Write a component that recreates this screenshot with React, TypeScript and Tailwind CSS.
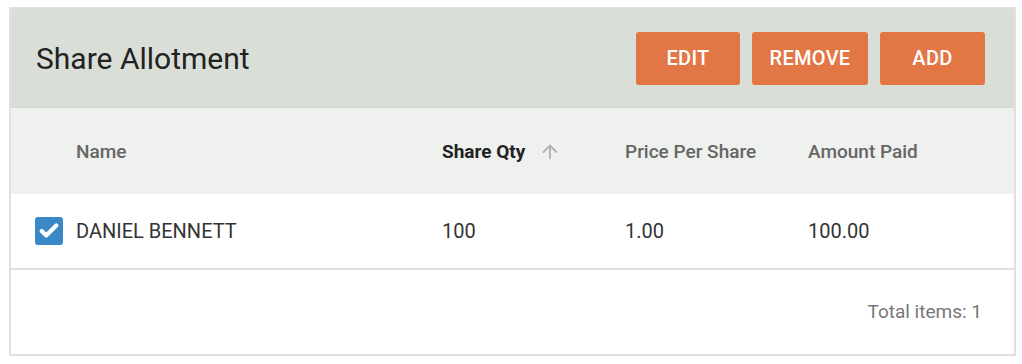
import { ArrowUp, Check } from 'lucide-react';

const rows = [{ name: 'DANIEL BENNETT', qty: '100', price: '1.00', paid: '100.00', checked: true }];

function ActionButton({ label, width }: { label: string; width: string }) {
  return (
    <button
      className={`flex h-[53px] items-center justify-center rounded-[3px] bg-[#e37645] text-[20px] font-medium tracking-[0.3px] text-white ${width}`}
    >
      {label}
    </button>
  );
}

export default function App() {
  return (
    <div className="min-h-screen bg-white pl-[9px] pt-[7px] font-['Roboto',sans-serif]">
      <div className="w-[1007px] border-2 border-[#e0e0e0]">
        <header className="flex h-[99px] items-center justify-between border-b border-[#d2d7d0] bg-[#d9ded7] pl-[25px] pr-[29px]">
          <h1 className="text-[30px] font-normal text-[#222]">Share Allotment</h1>
          <div className="flex gap-3">
            <ActionButton label="EDIT" width="w-[104px]" />
            <ActionButton label="REMOVE" width="w-[116px]" />
            <ActionButton label="ADD" width="w-[105px]" />
          </div>
        </header>

        <div className="flex h-[86px] items-center bg-[#eff1ef] pt-[2px] text-[19px] font-medium text-[#666]">
          <div className="w-[65px] shrink-0" />
          <div className="w-[366px] shrink-0">Name</div>
          <div className="flex w-[183px] shrink-0 items-center gap-[14px] text-[#222]">
            <span className="font-bold">Share Qty</span>
            <ArrowUp className="h-[22px] w-[22px] text-[#b0b0b0]" strokeWidth={2} />
          </div>
          <div className="w-[183px] shrink-0">Price Per Share</div>
          <div>Amount Paid</div>
        </div>

        {rows.map((r) => (
          <div key={r.name} className="flex h-[76px] items-center border-b-2 border-[#e0e0e0] bg-white text-[20px] text-[#333]">
            <div className="flex w-[65px] shrink-0 pl-[24px]">
              <span className="flex h-[28px] w-[28px] items-center justify-center rounded-[3px] bg-[#3a88c8]">
                {r.checked && <Check className="h-[22px] w-[22px] text-white" strokeWidth={4.5} />}
              </span>
            </div>
            <div className="w-[366px] shrink-0">{r.name}</div>
            <div className="w-[183px] shrink-0">{r.qty}</div>
            <div className="w-[183px] shrink-0">{r.price}</div>
            <div>{r.paid}</div>
          </div>
        ))}

        <footer className="flex h-[84px] items-center justify-end pr-[32px] text-[19px] text-[#777]">
          Total items: 1
        </footer>
      </div>
    </div>
  );
}
